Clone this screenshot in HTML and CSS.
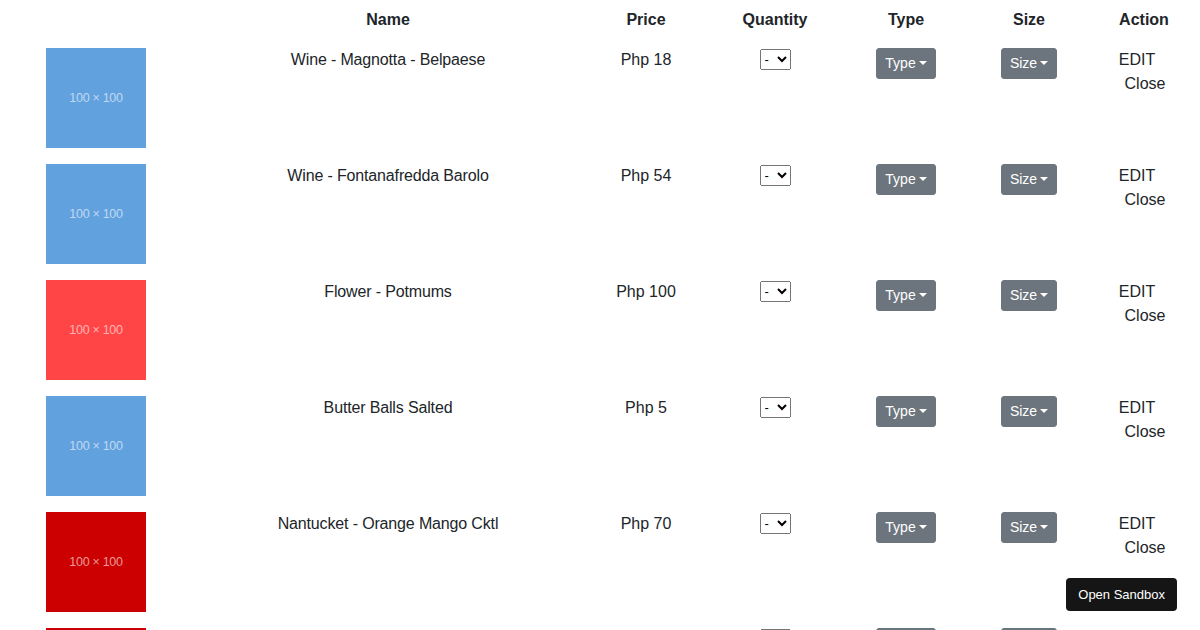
FILE: index.html
```html
<!DOCTYPE html>
<html>
<head>
<meta charset="utf-8">
<link rel="stylesheet" href="styles.css">
</head>
<body>
<table class="cart">
  <colgroup>
    <col class="c-img"><col class="c-name"><col class="c-price"><col class="c-qty"><col class="c-type"><col class="c-size"><col class="c-act">
  </colgroup>
  <thead>
    <tr><th></th><th>Name</th><th>Price</th><th>Quantity</th><th>Type</th><th>Size</th><th>Action</th></tr>
  </thead>
  <tbody>
    <tr>
      <td><div class="thumb blue">100 × 100</div></td>
      <td class="name">Wine - Magnotta - Belpaese</td>
      <td>Php 18</td>
      <td><select class="qty"><option>-</option></select></td>
      <td><button class="btn dd">Type</button></td>
      <td><button class="btn dd">Size</button></td>
      <td><div class="edit">EDIT</div><div class="close">Close</div></td>
    </tr>
    <tr>
      <td><div class="thumb blue">100 × 100</div></td>
      <td class="name">Wine - Fontanafredda Barolo</td>
      <td>Php 54</td>
      <td><select class="qty"><option>-</option></select></td>
      <td><button class="btn dd">Type</button></td>
      <td><button class="btn dd">Size</button></td>
      <td><div class="edit">EDIT</div><div class="close">Close</div></td>
    </tr>
    <tr>
      <td><div class="thumb red">100 × 100</div></td>
      <td class="name">Flower - Potmums</td>
      <td>Php 100</td>
      <td><select class="qty"><option>-</option></select></td>
      <td><button class="btn dd">Type</button></td>
      <td><button class="btn dd">Size</button></td>
      <td><div class="edit">EDIT</div><div class="close">Close</div></td>
    </tr>
    <tr>
      <td><div class="thumb blue">100 × 100</div></td>
      <td class="name">Butter Balls Salted</td>
      <td>Php 5</td>
      <td><select class="qty"><option>-</option></select></td>
      <td><button class="btn dd">Type</button></td>
      <td><button class="btn dd">Size</button></td>
      <td><div class="edit">EDIT</div><div class="close">Close</div></td>
    </tr>
    <tr>
      <td><div class="thumb dark">100 × 100</div></td>
      <td class="name">Nantucket - Orange Mango Cktl</td>
      <td>Php 70</td>
      <td><select class="qty"><option>-</option></select></td>
      <td><button class="btn dd">Type</button></td>
      <td><button class="btn dd">Size</button></td>
      <td><div class="edit">EDIT</div><div class="close">Close</div></td>
    </tr>
    <tr>
      <td><div class="thumb dark"></div></td>
      <td></td>
      <td></td>
      <td><select class="qty"><option>-</option></select></td>
      <td><button class="btn dd">Type</button></td>
      <td><button class="btn dd">Size</button></td>
      <td></td>
    </tr>
  </tbody>
</table>
<div class="sandbox">Open Sandbox</div>
</body>
</html>
```
FILE: styles.css
```css
html, body {
  margin: 0;
  padding: 0;
  background: #fff;
}
body {
  font-family: "Liberation Sans", Arial, sans-serif;
  font-size: 16px;
  line-height: 1.5;
  color: #212529;
  overflow: hidden;
}
.cart {
  width: 1200px;
  table-layout: fixed;
  border-collapse: collapse;
}
.c-img { width: 192px; }
.c-name { width: 392px; }
.c-price { width: 124px; }
.c-qty { width: 134px; }
.c-type { width: 128px; }
.c-size { width: 118px; }
.c-act { width: 112px; }
.cart th {
  font-weight: bold;
  text-align: center;
  padding: 8px 0 8px;
  vertical-align: top;
}
.cart td {
  text-align: center;
  vertical-align: top;
  padding: 8px 0;
}
.cart td.name {
  letter-spacing: -0.15px;
}
.thumb {
  width: 100px;
  height: 100px;
  margin: 0 auto;
  display: flex;
  align-items: center;
  justify-content: center;
  font-size: 12.5px;
  color: rgba(255, 255, 255, 0.6);
  letter-spacing: -0.3px;
}
.blue { background: #61a1de; }
.red { background: #ff4545; }
.dark { background: #cc0000; }
.qty {
  font-family: "Liberation Sans", Arial, sans-serif;
  font-size: 13px;
  height: 21px;
  width: 31px;
  margin-top: 1px;
  vertical-align: top;
}
.btn {
  display: inline-block;
  font-family: "Liberation Sans", Arial, sans-serif;
  font-size: 14px;
  line-height: 21px;
  padding: 4px 8px;
  color: #fff;
  background: #6c757d;
  border: 1px solid #6c757d;
  border-radius: 3px;
  vertical-align: top;
}
.dd::after {
  content: "";
  display: inline-block;
  margin-left: 3px;
  vertical-align: 3px;
  border-top: 4px solid #fff;
  border-left: 4px solid transparent;
  border-right: 4px solid transparent;
}
.edit {
  padding-right: 14px;
}
.close {
  padding-left: 2px;
}
.sandbox {
  position: fixed;
  right: 23px;
  bottom: 19px;
  background: #151515;
  color: #fff;
  font-size: 13px;
  line-height: 15px;
  padding: 9px 12px;
  border-radius: 4px;
}
```
